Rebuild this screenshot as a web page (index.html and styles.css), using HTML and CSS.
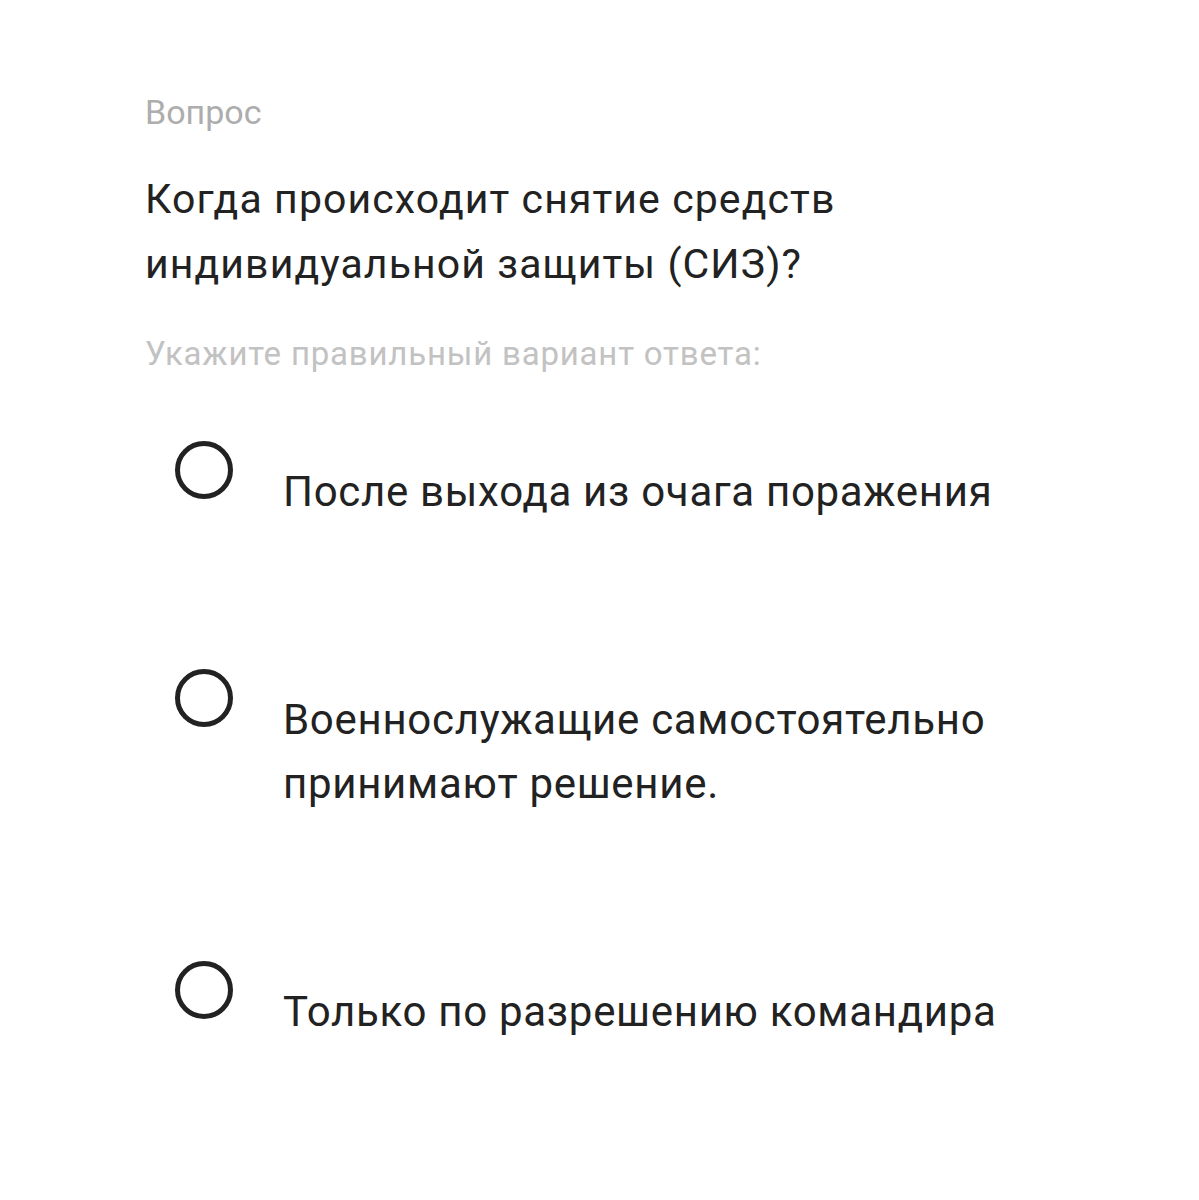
FILE: index.html
```html
<!DOCTYPE html>
<html lang="ru">
<head>
    <meta charset="UTF-8">
    <meta name="viewport" content="width=device-width, initial-scale=1.0">
    <title>Вопрос</title>
    <link rel="stylesheet" href="styles.css">
</head>
<body>
    <div class="quiz">
        <div class="quiz-label">Вопрос</div>
        <div class="quiz-question">Когда происходит снятие средств индивидуальной защиты (СИЗ)?</div>
        <div class="quiz-hint">Укажите правильный вариант ответа:</div>
        <div class="options">
            <label class="option">
                <span class="radio"></span>
                <span class="option-text">После выхода из очага поражения</span>
            </label>
            <label class="option">
                <span class="radio"></span>
                <span class="option-text">Военнослужащие самостоятельно принимают решение.</span>
            </label>
            <label class="option">
                <span class="radio"></span>
                <span class="option-text">Только по разрешению командира</span>
            </label>
        </div>
    </div>
</body>
</html>
```

FILE: styles.css
```css
body {
    margin: 0;
    background: #fff;
    font-family: Roboto, "Noto Sans", Arial, sans-serif;
    color: #222;
}
.quiz {
    padding: 92px 100px 0 145px;
}
.quiz-label {
    font-size: 34px;
    line-height: 40px;
    color: #adadad;
}
.quiz-question {
    margin-top: 35px;
    font-size: 41px;
    line-height: 65px;
    letter-spacing: 1.1px;
    width: 740px;
}
.quiz-hint {
    margin-top: 37px;
    font-size: 33px;
    line-height: 40px;
    letter-spacing: 0.8px;
    color: #c2c2c2;
}
.options {
    margin-top: 67px;
    display: flex;
    flex-direction: column;
    gap: 145px;
}
.option {
    display: flex;
    align-items: flex-start;
    padding-left: 30px;
    cursor: pointer;
}
.radio {
    flex: none;
    width: 48px;
    height: 48px;
    border: 5px solid #222;
    border-radius: 50%;
}
.option-text {
    margin-left: 50px;
    padding-top: 19px;
    font-size: 42px;
    line-height: 64px;
    letter-spacing: 0.7px;
    width: 730px;
}
```
